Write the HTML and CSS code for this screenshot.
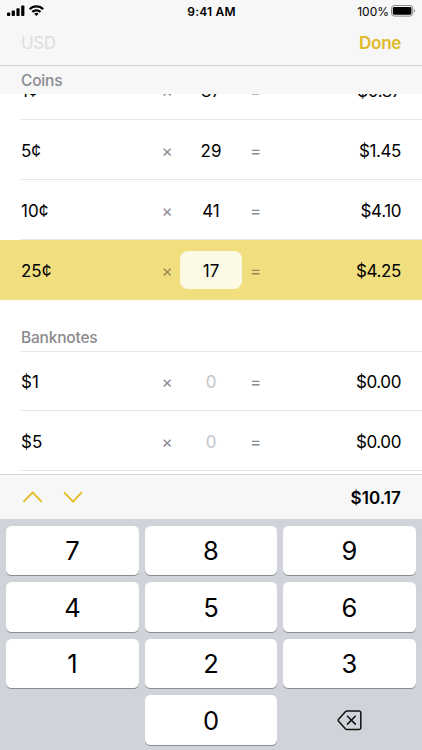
FILE: index.html
```html
<!DOCTYPE html>
<html lang="en">
<head>
<meta charset="utf-8">
<title>Cash counter</title>
<link rel="stylesheet" href="styles.css">
</head>
<body>
<div class="screen">
  <header class="top">
    <div class="status">
      <div class="status-left">
        <svg width="38" height="12" viewBox="0 0 38 12">
          <rect x="0" y="7.5" width="3.200" height="3.5" rx=".8"/>
          <rect x="4.7" y="5.5" width="3.200" height="5.5" rx=".8"/>
          <rect x="9.4" y="3.2" width="3.200" height="7.8" rx=".8"/>
          <rect x="14.2" y="0.5" width="3.200" height="10.5" rx=".8"/>
          <g fill="none" stroke="#000" stroke-width="2.200">
            <path d="M22.700 4.200a9.400 9.400 0 0 1 13.400 0"/>
            <path d="M25.300 7a5.800 5.800 0 0 1 8.200 0"/>
          </g>
          <path d="M27.200 8.700a3.200 3.200 0 0 1 4.400 0L29.400 11z"/>
        </svg>
      </div>
      <div class="time">9:41 AM</div>
      <div class="status-right">
        <span>100%</span>
        <svg width="25" height="12" viewBox="0 0 25 12">
          <rect x=".5" y=".5" width="21.2" height="10.600" rx="2.800" fill="none" stroke="#888"/>
          <rect x="1.800" y="1.900" width="18.600" height="7.800" rx="1.400"/>
          <path d="M22.900 4c1.400.4 1.400 3.200 0 3.600z" fill="#888"/>
        </svg>
      </div>
    </div>
    <nav class="nav"><span class="currency">USD</span><span class="done">Done</span></nav>
  </header>
  <h2 class="section pinned">Coins</h2>
  <main class="list">
    <div class="rows coins">
      <div class="row"><span>1¢</span><i>×</i><b>37</b><i>=</i><span class="sum">$0.37</span></div>
      <div class="row"><span>5¢</span><i>×</i><b>29</b><i>=</i><span class="sum">$1.45</span></div>
      <div class="row"><span>10¢</span><i>×</i><b>41</b><i>=</i><span class="sum">$4.10</span></div>
      <div class="row active"><span>25¢</span><i>×</i><b>17</b><i>=</i><span class="sum">$4.25</span></div>
    </div>
    <h2 class="section plain">Banknotes</h2>
    <div class="rows notes">
      <div class="row"><span>$1</span><i>×</i><b class="empty">0</b><i>=</i><span class="sum">$0.00</span></div>
      <div class="row"><span>$5</span><i>×</i><b class="empty">0</b><i>=</i><span class="sum">$0.00</span></div>
    </div>
  </main>
  <div class="toolbar">
    <svg width="60" height="14" viewBox="0 0 60 14" fill="none" stroke="#e2bc22" stroke-width="1.8" stroke-linecap="round" stroke-linejoin="round">
      <path d="M1 11.400 9.600 2.400 18.200 11.400"/>
      <path d="M41.500 2.600 50 11.600 58.500 2.600"/>
    </svg>
    <span class="total">$10.17</span>
  </div>
  <div class="keypad">
    <div class="key">7</div><div class="key">8</div><div class="key">9</div>
    <div class="key">4</div><div class="key">5</div><div class="key">6</div>
    <div class="key">1</div><div class="key">2</div><div class="key">3</div>
    <div></div><div class="key">0</div>
    <div class="delete">
      <svg width="25" height="21" viewBox="0 0 25 21" fill="none" stroke="#111" stroke-width="1.5" stroke-linecap="round" stroke-linejoin="round">
        <path d="M10 1H22a1.800 1.800 0 0 1 1.800 1.800V17.800a1.800 1.800 0 0 1-1.800 1.800H10a2 2 0 0 1-1.400-.6L1.800 11.500a1.800 1.800 0 0 1 0-2.400L8.600 1.600A2 2 0 0 1 10 1z"/>
        <path d="m10.500 6.300 7.800 7.800m0-7.800-7.800 7.800"/>
      </svg>
    </div>
  </div>
</div>
</body>
</html>
```
FILE: styles.css
```css
* { box-sizing: border-box; }

body {
  margin: 0;
  font-family: Inter, "Liberation Sans", sans-serif;
  font-size: 17px;
  color: #000;
}

.screen {
  width: 422px;
  height: 750px;
  display: flex;
  flex-direction: column;
  overflow: hidden;
  background: #fff;
}

svg { display: block; }

.top {
  height: 66px;
  background: #f7f7f7;
  border-bottom: 1px solid #d2d2d3;
}

.status {
  height: 22px;
  padding: 0 6px 0 7px;
  display: grid;
  grid-template-columns: 1fr auto 1fr;
  align-items: center;
  font-size: 12px;
}

.status-left { margin-top: -1px; }

.time { font-weight: 600; letter-spacing: 0.2px; }

.status-right {
  display: flex;
  justify-content: flex-end;
  align-items: center;
  gap: 2px;
}

.nav {
  height: 42px;
  padding: 0 21px;
  display: flex;
  align-items: center;
  justify-content: space-between;
}

.currency { color: #dedede; letter-spacing: -0.4px; }
.done { color: #dfba2c; font-weight: 600; letter-spacing: -0.3px; }

.section {
  margin: 0;
  padding-left: 21px;
  font-size: 15.5px;
  font-weight: 550;
  letter-spacing: -0.2px;
  color: #8a8a8e;
}

.pinned {
  height: 28px;
  line-height: 29px;
  background: #f7f7f7;
}

.plain {
  height: 51px;
  padding-top: 23px;
  line-height: 29px;
}

.list {
  height: 380px;
  overflow: hidden;
}

.coins { margin-top: -34px; }

.row {
  height: 60px;
  padding: 0 21px;
  display: grid;
  grid-template-columns: 133px 20px 62px 21px 1fr;
  column-gap: 3px;
  align-items: center;
  background: linear-gradient(#e5e5e6, #e5e5e6) 21px 100% / 100% 1px no-repeat;
}

.row span { padding-top: 1px; }

.row i {
  padding-top: 1px;
  font-style: normal;
  text-align: center;
  color: #8b8b90;
}

.row b {
  height: 38px;
  line-height: 40px;
  border-radius: 8px;
  font-weight: 400;
  text-align: center;
}

.row .empty { color: #c5c5c8; }
.sum { text-align: right; letter-spacing: -0.4px; }

.active { background: #f1de7e; }
.active b { background: #fcf9e5; }
.active i { color: #948a50; }

.notes { background: linear-gradient(#e5e5e6, #e5e5e6) 21px 0 / 100% 1px no-repeat; }

.toolbar {
  height: 45px;
  padding: 0 21px 0 23px;
  display: flex;
  align-items: center;
  justify-content: space-between;
  background: #f7f7f7;
  border-top: 1px solid #d8d8d9;
}

.total { padding-top: 1px; font-weight: 600; letter-spacing: 0.1px; }

.keypad {
  flex: 1;
  padding: 6.800px 6.300px 0;
  display: grid;
  grid-template-columns: repeat(3, 1fr);
  grid-auto-rows: 49.500px;
  gap: 7px 6px;
  align-content: start;
  background: #d0d3d9;
}

.key {
  display: flex;
  align-items: center;
  justify-content: center;
  background: #fff;
  border-radius: 5.500px;
  box-shadow: 0 1px 0 #8b8d91;
  font-size: 25.500px;
  font-weight: 380;
}

.delete {
  display: flex;
  align-items: center;
  justify-content: center;
}
```
